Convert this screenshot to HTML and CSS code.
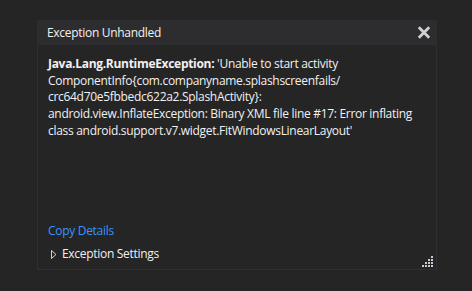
FILE: index.html
```html
<!DOCTYPE html>
<html lang="en">
<head>
  <meta charset="UTF-8" />
  <title>Exception Unhandled</title>
  <link rel="stylesheet" href="styles.css">
</head>
<body>
  <div class="dialog">
    <div class="dialog-header">
      <span class="dialog-title">Exception Unhandled</span>
      <button class="close-button" aria-label="Close">
        <svg width="14" height="13" viewBox="0 0 14 13">
          <path d="M1.8 1.3 L12.2 11.7 M12.2 1.3 L1.8 11.7" stroke="#cfcfcf" stroke-width="2.8" />
        </svg>
      </button>
    </div>

    <div class="dialog-body">
      <p class="message"><strong>Java.Lang.RuntimeException:</strong> 'Unable to start activity ComponentInfo{com.companyname.splashscreenfails/ crc64d70e5fbbedc622a2.SplashActivity}:<br>android.view.InflateException: Binary XML file line #17: Error inflating class android.support.v7.widget.FitWindowsLinearLayout'</p>

      <div class="footer">
        <a class="copy-link" href="#">Copy Details</a>
        <div class="settings">
          <svg class="caret" width="6" height="9" viewBox="0 0 6 9">
            <path d="M0.5 0.5 L5 4.5 L0.5 8.5 Z" fill="none" stroke="#d0d0d0" stroke-width="1" />
          </svg>
          <span>Exception Settings</span>
        </div>
      </div>
    </div>

    <svg class="grip" width="12" height="11" viewBox="0 0 12 11">
      <g fill="#c8cbd4">
        <rect x="9" y="0" width="2" height="2" />
        <rect x="6" y="3" width="2" height="2" /><rect x="9" y="3" width="2" height="2" />
        <rect x="3" y="6" width="2" height="2" /><rect x="6" y="6" width="2" height="2" /><rect x="9" y="6" width="2" height="2" />
        <rect x="0" y="9" width="2" height="2" /><rect x="3" y="9" width="2" height="2" /><rect x="6" y="9" width="2" height="2" /><rect x="9" y="9" width="2" height="2" />
      </g>
    </svg>
  </div>
</body>
</html>
```

FILE: styles.css
```css
* {
  box-sizing: border-box;
}

body {
  margin: 0;
  padding: 20px 0 0 37px;
  background: #252526;
  font-family: 'Open Sans', 'Noto Sans', sans-serif;
  color: #f1f1f1;
  height: 291px;
  overflow: hidden;
}

.dialog {
  position: relative;
  width: 400px;
  height: 250px;
  background: #252526;
  border: 1px solid #2f2f33;
  display: flex;
  flex-direction: column;
}

.dialog-header {
  height: 25px;
  background: #2d2d30;
  display: flex;
  align-items: center;
  justify-content: space-between;
  padding: 0 3px 0 10px;
  margin: -1px -1px 0 -1px;
}

.dialog-title {
  font-size: 12px;
  letter-spacing: -0.3px;
  color: #f1f1f1;
}

.close-button {
  background: none;
  border: none;
  padding: 0;
  width: 20px;
  height: 20px;
  display: flex;
  align-items: center;
  justify-content: center;
  cursor: pointer;
}

.dialog-body {
  flex: 1;
  padding: 11px 8px 0 10px;
  display: flex;
  flex-direction: column;
}

.message {
  margin: 0;
  font-size: 12px;
  letter-spacing: -0.3px;
  line-height: 16.7px;
  color: #f1f1f1;
}

.message strong {
  font-weight: bold;
}

.footer {
  margin-top: auto;
  padding-bottom: 6px;
  letter-spacing: -0.3px;
}

.copy-link {
  display: block;
  color: #3794ff;
  text-decoration: none;
  font-size: 12px;
  line-height: 18px;
  margin-bottom: 5px;
}

.settings {
  display: flex;
  align-items: center;
  gap: 5px;
  font-size: 12px;
  line-height: 18px;
  padding-left: 3px;
}

.grip {
  position: absolute;
  right: 2px;
  bottom: 2px;
}
```
